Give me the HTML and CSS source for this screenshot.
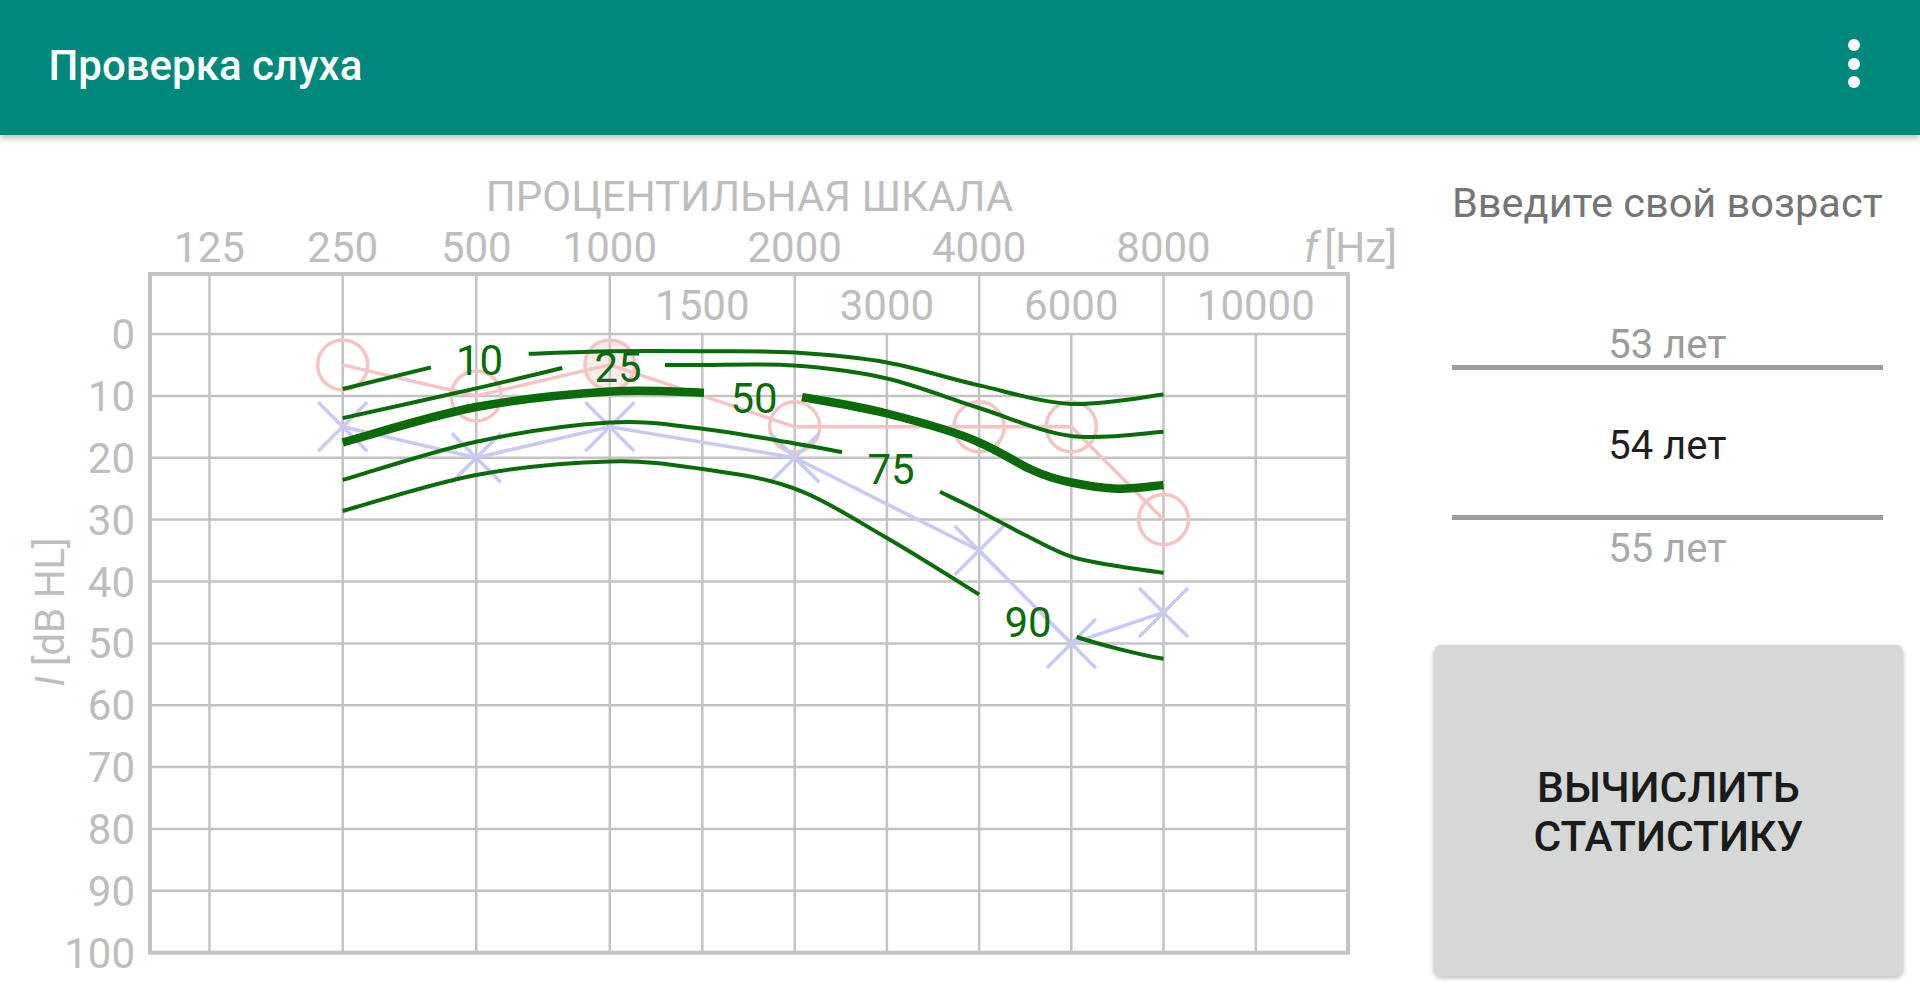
FILE: index.html
```html
<!DOCTYPE html>
<html lang="ru">
<head>
<meta charset="utf-8">
<title>Проверка слуха</title>
<link rel="stylesheet" href="styles.css">
</head>
<body>
<header class="appbar">
  <h1 class="appbar-title">Проверка слуха</h1>
  <div class="overflow" aria-label="Меню">
    <span class="dot"></span><span class="dot"></span><span class="dot"></span>
  </div>
</header>
<main class="content">
  <svg class="chart" viewBox="0 135 1434 865" width="1434" height="865" xmlns="http://www.w3.org/2000/svg">
    <g class="grid">
      <path class="gl" d="M150 334H1348M150 395.9H1348M150 457.7H1348M150 519.6H1348M150 581.5H1348M150 643.4H1348M150 705.2H1348M150 767H1348M150 829H1348M150 890.8H1348"/>
      <path class="gl" d="M209.5 274V952.7M342.7 274V952.7M476.3 274V952.7M609.8 274V952.7M794.7 274V952.7M979.1 274V952.7M1163.5 274V952.7M702.3 334V952.7M886.9 334V952.7M1071.3 334V952.7M1255.8 334V952.7"/>
      <rect class="frame" x="150" y="274" width="1198" height="678.7"/>
    </g>

    <text class="ax-title" x="749.5" y="211">ПРОЦЕНТИЛЬНАЯ ШКАЛА</text>
    <g class="ax ax-mid">
      <text x="209.5" y="262">125</text>
      <text x="342.7" y="262">250</text>
      <text x="476.3" y="262">500</text>
      <text x="609.8" y="262">1000</text>
      <text x="794.7" y="262">2000</text>
      <text x="979.1" y="262">4000</text>
      <text x="1163.5" y="262">8000</text>
      <text x="702.3" y="320">1500</text>
      <text x="886.9" y="320">3000</text>
      <text x="1071.3" y="320">6000</text>
      <text x="1255.8" y="320">10000</text>
    </g>
    <text class="ax" x="1304" y="262"><tspan class="it">f</tspan><tspan dx="6">[Hz]</tspan></text>
    <g class="ax ax-end">
      <text x="135" y="349">0</text>
      <text x="135" y="410.9">10</text>
      <text x="135" y="472.7">20</text>
      <text x="135" y="534.6">30</text>
      <text x="135" y="596.5">40</text>
      <text x="135" y="658.4">50</text>
      <text x="135" y="720.2">60</text>
      <text x="135" y="782">70</text>
      <text x="135" y="844">80</text>
      <text x="135" y="905.8">90</text>
      <text x="135" y="967.7">100</text>
    </g>
    <text class="ax ax-y" transform="translate(64 612) rotate(-90)"><tspan class="it">I</tspan> [dB HL]</text>

    <g class="right-ear">
      <polyline class="pink-line" points="342.7,364.9 476.3,395.9 609.8,364.9 794.7,426.8 979.1,426.8 1071.3,426.8 1163.5,519.6"/>
      <circle class="pink-o" cx="342.7" cy="364.9" r="25"/>
      <circle class="pink-o" cx="476.3" cy="395.9" r="25"/>
      <circle class="pink-o pink-fill" cx="609.8" cy="364.9" r="25"/>
      <circle class="pink-o" cx="794.7" cy="426.8" r="25"/>
      <circle class="pink-o" cx="979.1" cy="426.8" r="25"/>
      <circle class="pink-o" cx="1071.3" cy="426.8" r="25"/>
      <circle class="pink-o" cx="1163.5" cy="519.6" r="25"/>
    </g>
    <g class="left-ear">
      <polyline class="blue-line" points="342.7,426.8 476.3,457.7 609.8,426.8 794.7,457.7 979.1,550.5 1071.3,643.4 1163.5,612.4"/>
      <path class="blue-x" d="M318.2 402.3l49 49m0 -49l-49 49M451.8 433.2l49 49m0 -49l-49 49M585.3 402.3l49 49m0 -49l-49 49M770.2 433.2l49 49m0 -49l-49 49M954.6 526l49 49m0 -49l-49 49M1046.8 618.9l49 49m0 -49l-49 49M1139 587.9l49 49m0 -49l-49 49"/>
    </g>

    <g class="percentiles">
      <path class="pc" d="M342.7 389L431 367.4"/>
      <path class="pc" d="M528.7 353.8C542.2 353.4 580.9 351.7 609.8 351.3C638.7 350.9 671.5 351.1 702.3 351.3C733.1 351.5 763.9 350.7 794.7 352.6C825.5 354.5 856.2 357 886.9 362.5C917.6 368 948.4 378.5 979.1 385.4C1009.8 392.3 1040.6 402.4 1071.3 403.9C1102 405.4 1148.1 396.2 1163.5 394.6"/>

      <path class="pc" d="M342.7 418.1C364.9 413.2 439.7 396.8 476.3 388.4C512.9 380.1 548 371.4 562.3 368"/>
      <path class="pc" d="M665 365C671.2 365 680.7 364.9 702.3 365C723.9 365.1 763.9 363.4 794.7 365.6C825.5 367.9 856.2 371.4 886.9 378.5C917.6 385.6 948.4 398.4 979.1 408C1009.8 417.6 1040.6 432 1071.3 436C1102 440 1148.1 432.5 1163.5 431.8"/>

      <path class="pc thick" d="M342.7 442.5C364.9 436.5 431.8 415.4 476.3 407C520.8 398.6 571.8 393.9 609.8 391.5C647.8 389.1 688.3 392.6 704 392.8"/>
      <path class="pc thick" d="M802 397.1C816.2 399.6 857.4 406 886.9 413.5C916.4 421 955.3 431.5 979.1 442.3C1002.9 453 1014.6 461.5 1030 469C1045.4 476.5 1056.8 479.5 1071.3 482.5C1085.8 485.5 1101.6 488 1117 488.7C1132.4 489.4 1155.8 485.6 1163.5 485"/>

      <path class="pc" d="M342.7 480C365 473.6 431.8 451.3 476.3 441.7C520.8 432.1 572.1 424.7 609.8 422.5C647.5 420.3 671.5 425.2 702.3 428.7C733.1 432.2 771.4 439.6 794.7 443.5C818 447.4 834.1 450.8 842 452.2"/>
      <path class="pc" d="M940 491.8C946.5 495 964.9 503.8 979.1 511C993.3 518.2 1009.6 527.4 1025 535C1040.4 542.6 1056 551.5 1071.3 556.7C1086.6 561.9 1101.6 563.3 1117 566C1132.4 568.7 1155.8 571.7 1163.5 572.8"/>

      <path class="pc" d="M342.7 511C365 505 431.8 483.3 476.3 475C520.8 466.8 572.1 462.5 609.8 461.5C647.5 460.5 671.5 464.5 702.3 469C733.1 473.5 763.9 477.2 794.7 488.7C825.5 500.2 856.2 520.4 886.9 538C917.6 555.6 963.7 585.1 979.1 594.5"/>
      <path class="pc" d="M1076.7 637C1098 644 1140 655 1163.5 658.8"/>
    </g>
    <g class="pc-label">
      <text x="479.5" y="374.5">10</text>
      <text x="618" y="381.5">25</text>
      <text x="754" y="412.5">50</text>
      <text x="891" y="483.5">75</text>
      <text x="1028" y="636.5">90</text>
    </g>
  </svg>

  <aside class="side">
    <p class="age-label">Введите свой возраст</p>
    <div class="picker">
      <div class="picker-row picker-prev">53 лет</div>
      <div class="picker-row picker-current">54 лет</div>
      <div class="picker-row picker-next">55 лет</div>
      <span class="picker-divider picker-divider-top"></span>
      <span class="picker-divider picker-divider-bottom"></span>
    </div>
    <button class="calc-button" type="button">ВЫЧИСЛИТЬ<br>СТАТИСТИКУ</button>
  </aside>
</main>
</body>
</html>
```

FILE: styles.css
```css
html, body {
  margin: 0;
  padding: 0;
  background: #ffffff;
}

body {
  width: 1920px;
  height: 1000px;
  overflow: hidden;
  font-family: Roboto, "Noto Sans", "Liberation Sans", sans-serif;
}

/* ---------- App bar ---------- */
.appbar {
  position: relative;
  z-index: 2;
  height: 135px;
  box-sizing: border-box;
  padding: 0 60px 0 48.5px;
  background: #00897b;
  display: flex;
  align-items: center;
  box-shadow: 0 3px 7px rgba(0, 0, 0, 0.28);
}

.appbar-title {
  margin: 0 0 4px 0;
  font-size: 42px;
  font-weight: 500;
  line-height: 50px;
  color: #ffffff;
  letter-spacing: 0;
}

.overflow {
  margin-left: auto;
  margin-top: -8px;
  display: flex;
  flex-direction: column;
  gap: 6.5px;
}

.dot {
  display: block;
  width: 12px;
  height: 12px;
  border-radius: 50%;
  background: #ffffff;
}

/* ---------- Content ---------- */
.content {
  display: flex;
  align-items: flex-start;
  height: 865px;
}

.chart {
  display: block;
  flex: 0 0 1434px;
}

.gl {
  fill: none;
  stroke: #c3c3c3;
  stroke-width: 2.5;
}

.frame {
  fill: none;
  stroke: #c3c3c3;
  stroke-width: 4;
}

.ax,
.ax-title {
  font-family: Roboto, "Liberation Sans", sans-serif;
  font-size: 42px;
  fill: #bdbdbd;
}

.ax-title {
  text-anchor: middle;
}

.ax-mid text {
  text-anchor: middle;
}

.ax-end text {
  text-anchor: end;
}

.ax-y {
  font-size: 40px;
  text-anchor: middle;
}

.it {
  font-style: italic;
}

.pink-line {
  fill: none;
  stroke: #f4c4c4;
  stroke-width: 3.5;
}

.pink-o {
  fill: none;
  stroke: #f4c4c4;
  stroke-width: 3.5;
}

.pink-fill {
  fill: rgba(246, 200, 200, 0.35);
}

.blue-line {
  fill: none;
  stroke: #c9c9f1;
  stroke-width: 3.5;
}

.blue-x {
  fill: none;
  stroke: #c9c9f1;
  stroke-width: 3.5;
}

.pc {
  fill: none;
  stroke: #0b6b0b;
  stroke-width: 4;
}

.pc.thick {
  stroke-width: 8.5;
}

.pc-label text {
  font-family: Roboto, "Liberation Sans", sans-serif;
  font-size: 42px;
  fill: #0b6b0b;
  text-anchor: middle;
}

/* ---------- Side panel ---------- */
.side {
  flex: 0 0 468px;
  display: flex;
  flex-direction: column;
}

.age-label {
  margin: 43px 20px 0 18px;
  height: 50px;
  line-height: 50px;
  font-size: 41.5px;
  color: #757575;
  text-align: center;
  white-space: nowrap;
}

.picker {
  position: relative;
  margin: 62px 20px 0 18px;
}

.picker-row {
  height: 103px;
  display: flex;
  align-items: center;
  justify-content: center;
  font-size: 40px;
  line-height: 1;
  box-sizing: border-box;
}

.picker-prev {
  color: #9b9b9b;
  padding-top: 6px;
}

.picker-current {
  color: #1f1f1f;
  padding-top: 2px;
}

.picker-next {
  color: #a9a9a9;
  padding-top: 2px;
}

.picker-divider {
  position: absolute;
  left: 0;
  right: 0;
  height: 5px;
  background: #9e9e9e;
}

.picker-divider-top {
  top: 75px;
}

.picker-divider-bottom {
  top: 225px;
}

.calc-button {
  margin: 46px 0 0 0;
  height: 331px;
  border: none;
  border-radius: 7px;
  background: #d6d7d7;
  box-shadow: 0 2px 5px rgba(0, 0, 0, 0.28);
  font-family: Roboto, "Noto Sans", "Liberation Sans", sans-serif;
  font-size: 42.5px;
  font-weight: 500;
  line-height: 49px;
  color: #1b1b1b;
  text-align: center;
  padding: 2px 0 0 0;
}
```
